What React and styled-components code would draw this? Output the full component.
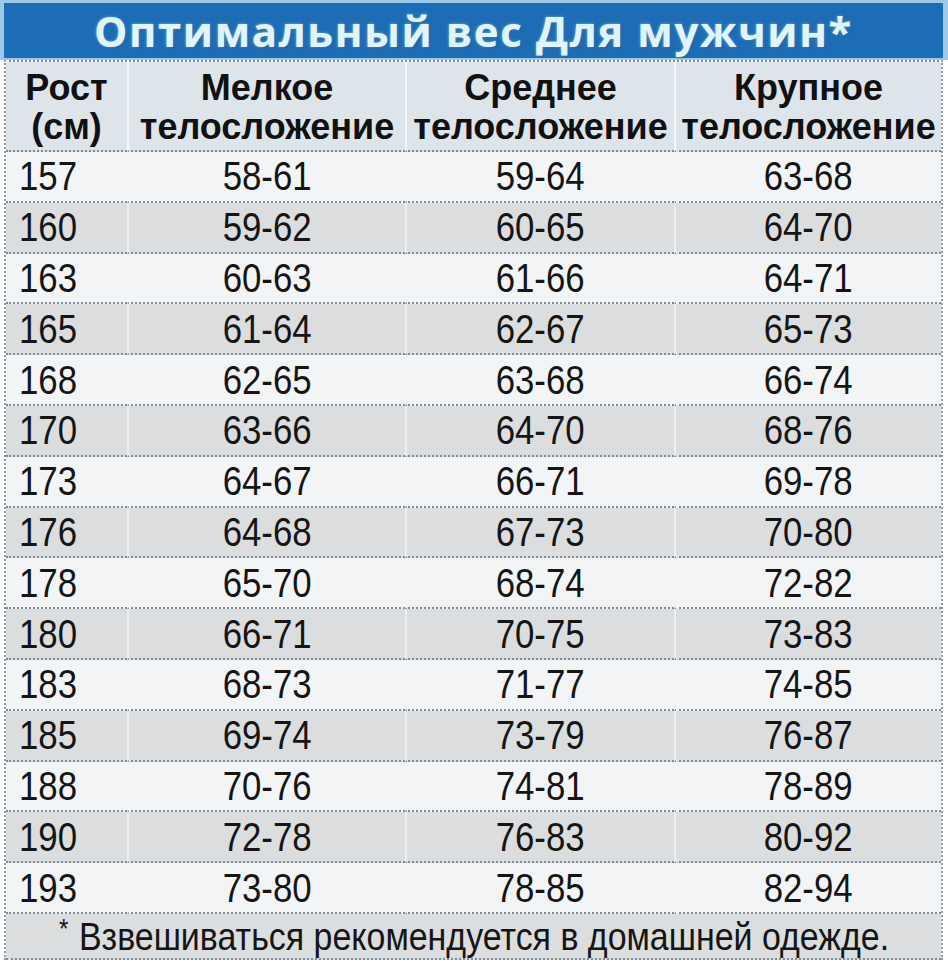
import styled, { createGlobalStyle } from 'styled-components'

const GlobalStyle = createGlobalStyle`
    html, body {
        margin: 0;
        padding: 0;
        background: #ffffff;
    }
    *, *::before, *::after {
        box-sizing: border-box;
    }
`

const Frame = styled.div`
    width: 948px;
    height: 970px;
    padding: 3px 5px 0 4px;
    background: linear-gradient(#9cc9e8 0, #9cc9e8 60px, #ffffff 60px);
    overflow: hidden;
`

const TitleBar = styled.div`
    height: 55px;
    background: #1d6cb6;
    display: flex;
    align-items: center;
    justify-content: center;
    font-family: "Open Sans", "Liberation Sans", sans-serif;
    font-weight: 700;
    font-size: 42px;
    letter-spacing: 1.6px;
    color: #dff4fb;
    text-shadow: 0 0 3px rgba(200, 240, 255, 0.6), 1px 1px 2px rgba(0, 30, 70, 0.5);
`

const Table = styled.div`
    display: grid;
    grid-template-columns: 121px 278px 269px 1fr;
    grid-template-rows: 90px repeat(15, 50.8px) 46px;
    border-top: 2px dotted #7c8c98;
    border-left: 2px dotted #8c9aa4;
    border-right: 2px dotted #8c9aa4;
    margin-top: 2px;
    background: #ffffff;
`

const HeadRow = styled.div`
    display: contents;
`

const HeadCell = styled.div`
    background: #dde5eb;
    display: flex;
    flex-direction: column;
    align-items: center;
    justify-content: center;
    padding-top: 2px;
    font-family: "Liberation Sans", Arial, sans-serif;
    font-weight: 700;
    font-size: 36px;
    line-height: 39px;
    color: #111111;
    white-space: nowrap;
    border-left: ${p => (p.first ? 'none' : '2px solid #f4f7f9')};
    border-bottom: 2px dotted #7c8c98;
`

const Cell = styled.div`
    background: ${p => (p.shade ? '#dcdddf' : '#f3f4f5')};
    display: flex;
    align-items: center;
    justify-content: ${p => (p.first ? 'flex-start' : 'center')};
    padding-left: ${p => (p.first ? '13px' : '0')};
    padding-top: 1px;
    font-family: "Liberation Sans", Arial, sans-serif;
    font-size: 40px;
    color: #151515;
    border-left: ${p => (p.first ? 'none' : p.shade ? '2px solid #eceeef' : '2px solid #f3f4f5')};
    border-bottom: 2px dotted #7c8c98;
`

const Narrow = styled.span`
    display: inline-block;
    white-space: nowrap;
    transform: scaleX(0.87);
    transform-origin: ${p => (p.left ? 'left center' : 'center')};
`

const Footer = styled.div`
    grid-column: 1 / -1;
    background: #dcdddf;
    display: flex;
    align-items: center;
    justify-content: center;
    padding-left: 2px;
    padding-top: 2px;
    font-family: "Liberation Sans", Arial, sans-serif;
    font-size: 39px;
    color: #151515;
    border-bottom: 2px dotted #7c8c98;
`

const Star = styled.span`
    display: inline-block;
    font-size: 28px;
    vertical-align: top;
    margin-right: 12px;
    position: relative;
    top: -2px;
`

const rows = [
    ['157', '58-61', '59-64', '63-68'],
    ['160', '59-62', '60-65', '64-70'],
    ['163', '60-63', '61-66', '64-71'],
    ['165', '61-64', '62-67', '65-73'],
    ['168', '62-65', '63-68', '66-74'],
    ['170', '63-66', '64-70', '68-76'],
    ['173', '64-67', '66-71', '69-78'],
    ['176', '64-68', '67-73', '70-80'],
    ['178', '65-70', '68-74', '72-82'],
    ['180', '66-71', '70-75', '73-83'],
    ['183', '68-73', '71-77', '74-85'],
    ['185', '69-74', '73-79', '76-87'],
    ['188', '70-76', '74-81', '78-89'],
    ['190', '72-78', '76-83', '80-92'],
    ['193', '73-80', '78-85', '82-94'],
]

const heads = [
    ['Рост', '(см)'],
    ['Мелкое', 'телосложение'],
    ['Среднее', 'телосложение'],
    ['Крупное', 'телосложение'],
]

const App = () => {
    return (
        <>
            <GlobalStyle />
            <Frame>
                <TitleBar>Оптимальный вес Для мужчин*</TitleBar>
                <Table>
                    <HeadRow>
                        {heads.map((h, i) => (
                            <HeadCell key={i} first={i === 0}>
                                <span>{h[0]}</span>
                                <span>{h[1]}</span>
                            </HeadCell>
                        ))}
                    </HeadRow>
                    {rows.map((r, ri) =>
                        r.map((v, ci) => (
                            <Cell key={ri + '-' + ci} first={ci === 0} shade={ri % 2 === 1}>
                                <Narrow left={ci === 0}>{v}</Narrow>
                            </Cell>
                        ))
                    )}
                    <Footer>
                        <Narrow>
                            <Star>*</Star>
                            Взвешиваться рекомендуется в домашней одежде.
                        </Narrow>
                    </Footer>
                </Table>
            </Frame>
        </>
    )
}

export default App
